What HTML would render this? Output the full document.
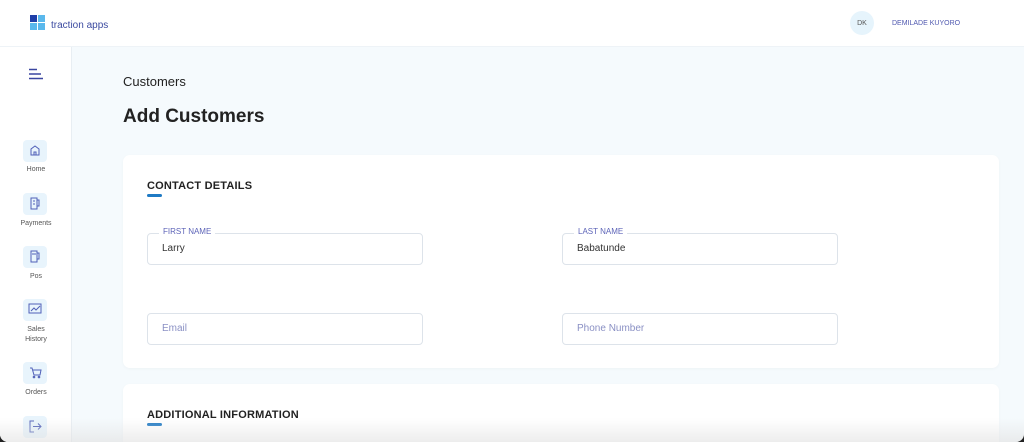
<!DOCTYPE html>
<html><head><style>
*{box-sizing:border-box;margin:0;padding:0}
body{width:1024px;height:442px;overflow:hidden;background:#222;font-family:"Liberation Sans",sans-serif;position:relative}
.win{position:absolute;left:0;top:0;width:1024px;height:442px;background:#f5fafd;border-radius:0 0 8px 8px;overflow:hidden}
.top{position:absolute;left:0;top:0;width:1024px;height:47px;background:#fff;border-bottom:1px solid #eef3f7}
.side{position:absolute;left:0;top:47px;width:72px;height:395px;background:#fff;border-right:1px solid #e8eef3}
.nav{position:absolute;left:23px;width:24px;height:22px;background:#e8f4fc;border-radius:4px}
.lbl{position:absolute;left:0;width:72px;text-align:center;font-size:7px;color:#555;line-height:10px}
.card{position:absolute;left:123px;width:876px;background:#fff;border-radius:7px;box-shadow:0 1px 3px rgba(0,0,0,.03)}
.h{position:absolute;left:24px;font-size:11px;font-weight:bold;color:#222;letter-spacing:.2px}
.bar{position:absolute;left:24px;width:15px;height:3px;background:#1f7ac4;border-radius:2px}
.in{position:absolute;width:276px;height:32px;border:1px solid #dde3ea;border-radius:4px;font-size:10px;color:#333;padding:9px 0 0 14px}
.ph{color:#8a90c4}
.leg{position:absolute;top:-7px;left:11px;background:#fff;padding:0 4px;font-size:8px;color:#5d64b8}
.svg{position:absolute}
</style></head><body>
<div class="win">
<div class="top">
 <div style="position:absolute;left:30px;top:15px;width:7px;height:7px;background:#1f3fa8"></div>
 <div style="position:absolute;left:38px;top:15px;width:7px;height:7px;background:#5ab8ec"></div>
 <div style="position:absolute;left:30px;top:23px;width:7px;height:7px;background:#5ab8ec"></div>
 <div style="position:absolute;left:38px;top:23px;width:7px;height:7px;background:#5ab8ec"></div>
 <div style="position:absolute;left:51px;top:20px;font-size:10px;color:#3b4aa0">traction apps</div>
 <div style="position:absolute;left:850px;top:11px;width:24px;height:24px;border-radius:50%;background:#e6f4fc;font-size:7px;color:#555;text-align:center;line-height:24px;padding-top:1px">DK</div>
 <div style="position:absolute;left:892px;top:20px;font-size:7px;color:#5059b0">DEMILADE KUYORO</div>
</div>
<div class="side">
 <svg class="svg" style="left:28px;top:21px" width="16" height="12"><path d="M1 1.5h8M1 6h12M1 10.5h14" stroke="#3b46a0" stroke-width="1.5"/></svg>
 <div class="nav" style="top:93px"></div><svg class="svg" style="left:29px;top:97px" width="12" height="12" fill="none" stroke="#5060b8"><path d="M2 11V5l4-3 4 3v6zM5 11V8h2v3"/></svg>
 <div class="lbl" style="top:118px">Home</div>
 <div class="nav" style="top:146px"></div><svg class="svg" style="left:29px;top:150px" width="12" height="13" fill="none" stroke="#5060b8"><path d="M2 1h6v11H2zM8 3h2v6H8M4 4h2M4 7h2"/></svg>
 <div class="lbl" style="top:172px">Payments</div>
 <div class="nav" style="top:199px"></div><svg class="svg" style="left:29px;top:203px" width="12" height="13" fill="none" stroke="#5060b8"><path d="M2 1h6v11H2zM8 3h2v6H8M3 4h4"/></svg>
 <div class="lbl" style="top:225px">Pos</div>
 <div class="nav" style="top:252px"></div><svg class="svg" style="left:28px;top:256px" width="14" height="12" fill="none" stroke="#5060b8"><path d="M1 1h12v9H1zM3 8l3-3 2 2 4-4"/></svg>
 <div class="lbl" style="top:278px">Sales<br>History</div>
 <div class="nav" style="top:315px"></div><svg class="svg" style="left:29px;top:319px" width="13" height="13" fill="none" stroke="#5060b8"><path d="M1 2h2l2 7h6l1-5H4"/><circle cx="5" cy="11" r=".8"/><circle cx="10" cy="11" r=".8"/></svg>
 <div class="lbl" style="top:341px">Orders</div>
 <div class="nav" style="top:369px"></div><svg class="svg" style="left:28px;top:373px" width="14" height="13" fill="none" stroke="#5060b8"><path d="M6 1H2v11h4M5 6.5h8M10 3.5l3 3-3 3"/></svg>
</div>
<div style="position:absolute;left:123px;top:74px;font-size:13px;color:#222">Customers</div>
<div style="position:absolute;left:123px;top:106px;font-size:19px;font-weight:bold;color:#222">Add Customers</div>
<div class="card" style="top:155px;height:213px">
 <div class="h" style="top:25px">CONTACT DETAILS</div><div class="bar" style="top:39px"></div>
 <div class="in" style="left:24px;top:78px"><span class="leg">FIRST NAME</span>Larry</div>
 <div class="in" style="left:439px;top:78px"><span class="leg">LAST NAME</span>Babatunde</div>
 <div class="in ph" style="left:24px;top:158px">Email</div>
 <div class="in ph" style="left:439px;top:158px">Phone Number</div>
</div>
<div class="card" style="top:384px;height:80px">
 <div class="h" style="top:25px">ADDITIONAL INFORMATION</div><div class="bar" style="top:39px"></div>
</div>
<div style="position:absolute;left:0;top:418px;width:1024px;height:24px;background:linear-gradient(rgba(255,255,255,0),rgba(225,225,225,.6))"></div>
</div>
</body></html>
